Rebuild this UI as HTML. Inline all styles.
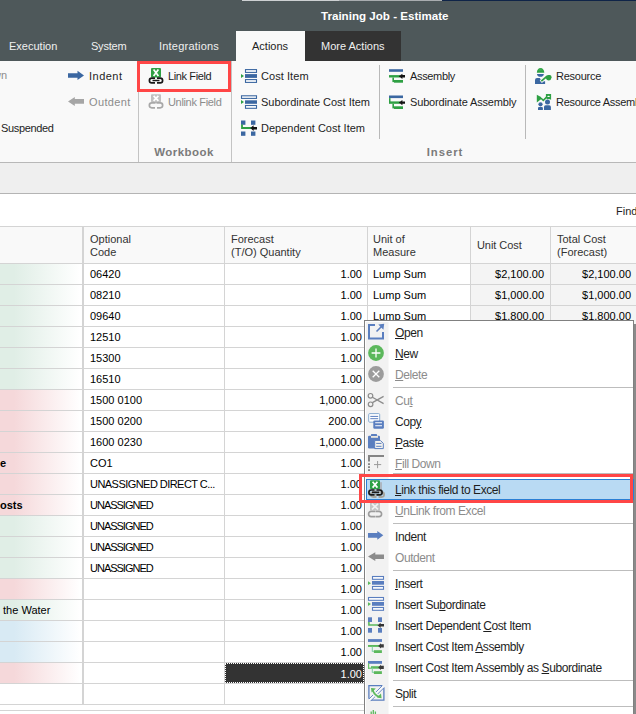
<!DOCTYPE html>
<html><head><meta charset="utf-8"><style>
html,body{margin:0;padding:0;width:636px;height:714px;overflow:hidden;background:#fff;position:relative}
.t{position:absolute;white-space:pre;line-height:1;font-family:"Liberation Sans",sans-serif}
.r{position:absolute}
svg{position:absolute;overflow:visible}
</style></head><body>
<div class="r" style="left:0px;top:0px;width:636px;height:61px;background:#4e585a;"></div>
<div class="r" style="left:242px;top:0px;width:97px;height:1px;background:#cdd0d2;"></div>
<div class="r" style="left:339px;top:0px;width:103px;height:1px;background:#a9adb0;"></div>
<div class="r" style="left:442px;top:0px;width:194px;height:1px;background:#0f2448;"></div>
<div class="t" style="left:321px;top:10.18px;font-size:11.6px;color:#ffffff;font-weight:bold;">Training Job - Estimate</div>
<div class="t" style="left:9px;top:40.69px;font-size:11px;color:#f0f0f0;font-weight:normal;">Execution</div>
<div class="t" style="left:91px;top:40.69px;font-size:11px;color:#f0f0f0;font-weight:normal;letter-spacing:-0.217px;">System</div>
<div class="t" style="left:159px;top:40.69px;font-size:11px;color:#f0f0f0;font-weight:normal;letter-spacing:0.211px;">Integrations</div>
<div class="r" style="left:236px;top:31px;width:69px;height:30px;background:#f9f9f9;"></div>
<div class="t" style="left:252px;top:40.69px;font-size:11px;color:#222;font-weight:normal;">Actions</div>
<div class="r" style="left:305px;top:31px;width:96px;height:30px;background:#333333;"></div>
<div class="t" style="left:321px;top:40.69px;font-size:11px;color:#f0f0f0;font-weight:normal;">More Actions</div>
<div class="r" style="left:0px;top:61px;width:636px;height:101px;background:#f9f9f9;"></div>
<div class="r" style="left:0px;top:162px;width:636px;height:1px;background:#b8b8b8;"></div>
<div class="r" style="left:138px;top:61px;width:1px;height:101px;background:#c4c4c4;"></div>
<div class="r" style="left:231px;top:61px;width:1px;height:101px;background:#c4c4c4;"></div>
<div class="r" style="left:379px;top:65px;width:1px;height:74px;background:#b9b9b9;"></div>
<div class="r" style="left:525px;top:65px;width:1px;height:74px;background:#b9b9b9;"></div>
<div class="t" style="left:-7px;top:69.69px;font-size:11px;color:#8c8c8c;font-weight:normal;">wn</div>
<div class="t" style="left:89px;top:70.69px;font-size:11px;color:#1e1e1e;font-weight:normal;letter-spacing:0.481px;">Indent</div>
<div class="t" style="left:89px;top:96.69px;font-size:11px;color:#8c8c8c;font-weight:normal;letter-spacing:0.360px;">Outdent</div>
<div class="t" style="left:1px;top:122.69px;font-size:11px;color:#1e1e1e;font-weight:normal;letter-spacing:-0.334px;">Suspended</div>
<div class="t" style="left:168px;top:70.69px;font-size:11px;color:#1e1e1e;font-weight:normal;letter-spacing:-0.386px;">Link Field</div>
<div class="t" style="left:168px;top:96.69px;font-size:11px;color:#8c8c8c;font-weight:normal;letter-spacing:-0.334px;">Unlink Field</div>
<div class="t" style="left:84px;width:200px;text-align:center;top:147.27px;font-size:11.5px;color:#7b7b7b;font-weight:bold;letter-spacing:0.426px;">Workbook</div>
<div class="t" style="left:261px;top:70.69px;font-size:11px;color:#1e1e1e;font-weight:normal;letter-spacing:0.065px;">Cost Item</div>
<div class="t" style="left:261px;top:96.69px;font-size:11px;color:#1e1e1e;font-weight:normal;letter-spacing:-0.023px;">Subordinate Cost Item</div>
<div class="t" style="left:261px;top:122.69px;font-size:11px;color:#1e1e1e;font-weight:normal;letter-spacing:0.003px;">Dependent Cost Item</div>
<div class="t" style="left:410px;top:70.69px;font-size:11px;color:#1e1e1e;font-weight:normal;letter-spacing:-0.341px;">Assembly</div>
<div class="t" style="left:410px;top:96.69px;font-size:11px;color:#1e1e1e;font-weight:normal;letter-spacing:-0.150px;">Subordinate Assembly</div>
<div class="t" style="left:345px;width:200px;text-align:center;top:147.43px;font-size:11.3px;color:#7b7b7b;font-weight:bold;letter-spacing:0.947px;">Insert</div>
<div class="t" style="left:556px;top:70.69px;font-size:11px;color:#1e1e1e;font-weight:normal;letter-spacing:-0.240px;">Resource</div>
<div class="t" style="left:556px;top:96.69px;font-size:11px;color:#1e1e1e;font-weight:normal;letter-spacing:-0.3px;">Resource Assembly</div>
<div class="r" style="left:137px;top:61px;width:88px;height:25px;border:3px solid #ff4646;"></div>
<div class="r" style="left:0px;top:163px;width:636px;height:30px;background:#efefef;"></div>
<div class="r" style="left:0px;top:193px;width:636px;height:1px;background:#b4b4b4;"></div>
<div class="r" style="left:0px;top:194px;width:636px;height:32px;background:#ffffff;"></div>
<div class="t" style="left:616px;top:205.69px;font-size:11px;color:#1e1e1e;font-weight:normal;">Find</div>
<div class="r" style="left:0px;top:226px;width:636px;height:1px;background:#d4d4d4;"></div>
<div class="r" style="left:0px;top:227px;width:636px;height:36px;background:#f9f9f9;"></div>
<div class="t" style="left:90px;top:233.69px;font-size:11px;color:#333;font-weight:normal;">Optional</div>
<div class="t" style="left:90px;top:246.69px;font-size:11px;color:#333;font-weight:normal;">Code</div>
<div class="t" style="left:231px;top:233.69px;font-size:11px;color:#333;font-weight:normal;">Forecast</div>
<div class="t" style="left:231px;top:246.69px;font-size:11px;color:#333;font-weight:normal;">(T/O) Quantity</div>
<div class="t" style="left:373px;top:233.69px;font-size:11px;color:#333;font-weight:normal;">Unit of</div>
<div class="t" style="left:373px;top:246.69px;font-size:11px;color:#333;font-weight:normal;">Measure</div>
<div class="t" style="left:477px;top:239.69px;font-size:11px;color:#333;font-weight:normal;letter-spacing:-0.069px;">Unit Cost</div>
<div class="t" style="left:557px;top:233.69px;font-size:11px;color:#333;font-weight:normal;">Total Cost</div>
<div class="t" style="left:557px;top:246.69px;font-size:11px;color:#333;font-weight:normal;">(Forecast)</div>
<div class="r" style="left:0px;top:263px;width:636px;height:1px;background:#d4d4d4;"></div>
<div class="r" style="left:0px;top:264px;width:82px;height:20px;background:linear-gradient(to right, #e0eee6 0px, #e0eee6 14px, #ffffff 80px);"></div>
<div class="r" style="left:84px;top:264px;width:552px;height:20px;background:#ffffff;"></div>
<div class="r" style="left:471px;top:264px;width:165px;height:20px;background:#f4f4f4;"></div>
<div class="t" style="left:90px;top:268.69px;font-size:11px;color:#000;font-weight:normal;">06420</div>
<div class="t" style="right:274px;top:268.69px;font-size:11px;color:#000;font-weight:normal;">1.00</div>
<div class="t" style="left:373px;top:268.69px;font-size:11px;color:#000;font-weight:normal;">Lump Sum</div>
<div class="t" style="right:92px;top:268.69px;font-size:11px;color:#000;font-weight:normal;">$2,100.00</div>
<div class="t" style="right:5px;top:268.69px;font-size:11px;color:#000;font-weight:normal;">$2,100.00</div>
<div class="r" style="left:0px;top:284px;width:636px;height:1px;background:#d4d4d4;"></div>
<div class="r" style="left:0px;top:285px;width:82px;height:20px;background:linear-gradient(to right, #e0eee6 0px, #e0eee6 14px, #ffffff 80px);"></div>
<div class="r" style="left:84px;top:285px;width:552px;height:20px;background:#ffffff;"></div>
<div class="r" style="left:471px;top:285px;width:165px;height:20px;background:#f4f4f4;"></div>
<div class="t" style="left:90px;top:289.69px;font-size:11px;color:#000;font-weight:normal;">08210</div>
<div class="t" style="right:274px;top:289.69px;font-size:11px;color:#000;font-weight:normal;">1.00</div>
<div class="t" style="left:373px;top:289.69px;font-size:11px;color:#000;font-weight:normal;">Lump Sum</div>
<div class="t" style="right:92px;top:289.69px;font-size:11px;color:#000;font-weight:normal;">$1,000.00</div>
<div class="t" style="right:5px;top:289.69px;font-size:11px;color:#000;font-weight:normal;">$1,000.00</div>
<div class="r" style="left:0px;top:305px;width:636px;height:1px;background:#d4d4d4;"></div>
<div class="r" style="left:0px;top:306px;width:82px;height:20px;background:linear-gradient(to right, #e0eee6 0px, #e0eee6 14px, #ffffff 80px);"></div>
<div class="r" style="left:84px;top:306px;width:552px;height:20px;background:#ffffff;"></div>
<div class="r" style="left:471px;top:306px;width:165px;height:20px;background:#f4f4f4;"></div>
<div class="t" style="left:90px;top:310.69px;font-size:11px;color:#000;font-weight:normal;">09640</div>
<div class="t" style="right:274px;top:310.69px;font-size:11px;color:#000;font-weight:normal;">1.00</div>
<div class="t" style="left:373px;top:310.69px;font-size:11px;color:#000;font-weight:normal;">Lump Sum</div>
<div class="t" style="right:92px;top:310.69px;font-size:11px;color:#000;font-weight:normal;">$1,800.00</div>
<div class="t" style="right:5px;top:310.69px;font-size:11px;color:#000;font-weight:normal;">$1,800.00</div>
<div class="r" style="left:0px;top:326px;width:636px;height:1px;background:#d4d4d4;"></div>
<div class="r" style="left:0px;top:327px;width:82px;height:20px;background:linear-gradient(to right, #e0eee6 0px, #e0eee6 14px, #ffffff 80px);"></div>
<div class="r" style="left:84px;top:327px;width:552px;height:20px;background:#ffffff;"></div>
<div class="r" style="left:471px;top:327px;width:165px;height:20px;background:#f4f4f4;"></div>
<div class="t" style="left:90px;top:331.69px;font-size:11px;color:#000;font-weight:normal;">12510</div>
<div class="t" style="right:274px;top:331.69px;font-size:11px;color:#000;font-weight:normal;">1.00</div>
<div class="r" style="left:0px;top:347px;width:636px;height:1px;background:#d4d4d4;"></div>
<div class="r" style="left:0px;top:348px;width:82px;height:20px;background:linear-gradient(to right, #e0eee6 0px, #e0eee6 14px, #ffffff 80px);"></div>
<div class="r" style="left:84px;top:348px;width:552px;height:20px;background:#ffffff;"></div>
<div class="r" style="left:471px;top:348px;width:165px;height:20px;background:#f4f4f4;"></div>
<div class="t" style="left:90px;top:352.69px;font-size:11px;color:#000;font-weight:normal;">15300</div>
<div class="t" style="right:274px;top:352.69px;font-size:11px;color:#000;font-weight:normal;">1.00</div>
<div class="r" style="left:0px;top:368px;width:636px;height:1px;background:#d4d4d4;"></div>
<div class="r" style="left:0px;top:369px;width:82px;height:20px;background:linear-gradient(to right, #e0eee6 0px, #e0eee6 14px, #ffffff 80px);"></div>
<div class="r" style="left:84px;top:369px;width:552px;height:20px;background:#ffffff;"></div>
<div class="r" style="left:471px;top:369px;width:165px;height:20px;background:#f4f4f4;"></div>
<div class="t" style="left:90px;top:373.69px;font-size:11px;color:#000;font-weight:normal;">16510</div>
<div class="t" style="right:274px;top:373.69px;font-size:11px;color:#000;font-weight:normal;">1.00</div>
<div class="r" style="left:0px;top:389px;width:636px;height:1px;background:#d4d4d4;"></div>
<div class="r" style="left:0px;top:390px;width:82px;height:20px;background:linear-gradient(to right, #f5d8da 0px, #f5d8da 14px, #ffffff 80px);"></div>
<div class="r" style="left:84px;top:390px;width:552px;height:20px;background:#ffffff;"></div>
<div class="r" style="left:471px;top:390px;width:165px;height:20px;background:#f4f4f4;"></div>
<div class="t" style="left:90px;top:394.69px;font-size:11px;color:#000;font-weight:normal;">1500 0100</div>
<div class="t" style="right:274px;top:394.69px;font-size:11px;color:#000;font-weight:normal;">1,000.00</div>
<div class="r" style="left:0px;top:410px;width:636px;height:1px;background:#d4d4d4;"></div>
<div class="r" style="left:0px;top:411px;width:82px;height:20px;background:linear-gradient(to right, #f5d8da 0px, #f5d8da 14px, #ffffff 80px);"></div>
<div class="r" style="left:84px;top:411px;width:552px;height:20px;background:#ffffff;"></div>
<div class="r" style="left:471px;top:411px;width:165px;height:20px;background:#f4f4f4;"></div>
<div class="t" style="left:90px;top:415.69px;font-size:11px;color:#000;font-weight:normal;">1500 0200</div>
<div class="t" style="right:274px;top:415.69px;font-size:11px;color:#000;font-weight:normal;">200.00</div>
<div class="r" style="left:0px;top:431px;width:636px;height:1px;background:#d4d4d4;"></div>
<div class="r" style="left:0px;top:432px;width:82px;height:20px;background:linear-gradient(to right, #f5d8da 0px, #f5d8da 14px, #ffffff 80px);"></div>
<div class="r" style="left:84px;top:432px;width:552px;height:20px;background:#ffffff;"></div>
<div class="r" style="left:471px;top:432px;width:165px;height:20px;background:#f4f4f4;"></div>
<div class="t" style="left:90px;top:436.69px;font-size:11px;color:#000;font-weight:normal;">1600 0230</div>
<div class="t" style="right:274px;top:436.69px;font-size:11px;color:#000;font-weight:normal;">1,000.00</div>
<div class="r" style="left:0px;top:452px;width:636px;height:1px;background:#d4d4d4;"></div>
<div class="r" style="left:0px;top:453px;width:82px;height:20px;background:linear-gradient(to right, #f5d8da 0px, #f5d8da 14px, #ffffff 80px);"></div>
<div class="r" style="left:84px;top:453px;width:552px;height:20px;background:#ffffff;"></div>
<div class="r" style="left:471px;top:453px;width:165px;height:20px;background:#f4f4f4;"></div>
<div class="t" style="left:0px;top:457.69px;font-size:11px;color:#000;font-weight:normal;"><b>e</b></div>
<div class="t" style="left:90px;top:457.69px;font-size:11px;color:#000;font-weight:normal;">CO1</div>
<div class="t" style="right:274px;top:457.69px;font-size:11px;color:#000;font-weight:normal;">1.00</div>
<div class="r" style="left:0px;top:473px;width:636px;height:1px;background:#d4d4d4;"></div>
<div class="r" style="left:0px;top:474px;width:82px;height:20px;background:linear-gradient(to right, #f5d8da 0px, #f5d8da 14px, #ffffff 80px);"></div>
<div class="r" style="left:84px;top:474px;width:552px;height:20px;background:#ffffff;"></div>
<div class="r" style="left:471px;top:474px;width:165px;height:20px;background:#f4f4f4;"></div>
<div class="t" style="left:90px;top:478.69px;font-size:11px;color:#000;font-weight:normal;letter-spacing:-0.544px;">UNASSIGNED DIRECT C...</div>
<div class="t" style="right:274px;top:478.69px;font-size:11px;color:#000;font-weight:normal;">1.00</div>
<div class="r" style="left:0px;top:494px;width:636px;height:1px;background:#d4d4d4;"></div>
<div class="r" style="left:0px;top:495px;width:82px;height:20px;background:linear-gradient(to right, #f5d8da 0px, #f5d8da 14px, #ffffff 80px);"></div>
<div class="r" style="left:84px;top:495px;width:552px;height:20px;background:#ffffff;"></div>
<div class="r" style="left:471px;top:495px;width:165px;height:20px;background:#f4f4f4;"></div>
<div class="t" style="left:0px;top:499.69px;font-size:11px;color:#000;font-weight:normal;"><b>osts</b></div>
<div class="t" style="left:90px;top:499.69px;font-size:11px;color:#000;font-weight:normal;letter-spacing:-1.006px;">UNASSIGNED</div>
<div class="t" style="right:274px;top:499.69px;font-size:11px;color:#000;font-weight:normal;">1.00</div>
<div class="r" style="left:0px;top:515px;width:636px;height:1px;background:#d4d4d4;"></div>
<div class="r" style="left:0px;top:516px;width:82px;height:20px;background:linear-gradient(to right, #e0eee6 0px, #e0eee6 14px, #ffffff 80px);"></div>
<div class="r" style="left:84px;top:516px;width:552px;height:20px;background:#ffffff;"></div>
<div class="r" style="left:471px;top:516px;width:165px;height:20px;background:#f4f4f4;"></div>
<div class="t" style="left:90px;top:520.69px;font-size:11px;color:#000;font-weight:normal;letter-spacing:-1.006px;">UNASSIGNED</div>
<div class="t" style="right:274px;top:520.69px;font-size:11px;color:#000;font-weight:normal;">1.00</div>
<div class="r" style="left:0px;top:536px;width:636px;height:1px;background:#d4d4d4;"></div>
<div class="r" style="left:0px;top:537px;width:82px;height:20px;background:linear-gradient(to right, #e0eee6 0px, #e0eee6 14px, #ffffff 80px);"></div>
<div class="r" style="left:84px;top:537px;width:552px;height:20px;background:#ffffff;"></div>
<div class="r" style="left:471px;top:537px;width:165px;height:20px;background:#f4f4f4;"></div>
<div class="t" style="left:90px;top:541.69px;font-size:11px;color:#000;font-weight:normal;letter-spacing:-1.006px;">UNASSIGNED</div>
<div class="t" style="right:274px;top:541.69px;font-size:11px;color:#000;font-weight:normal;">1.00</div>
<div class="r" style="left:0px;top:557px;width:636px;height:1px;background:#d4d4d4;"></div>
<div class="r" style="left:0px;top:558px;width:82px;height:20px;background:linear-gradient(to right, #e0eee6 0px, #e0eee6 14px, #ffffff 80px);"></div>
<div class="r" style="left:84px;top:558px;width:552px;height:20px;background:#ffffff;"></div>
<div class="r" style="left:471px;top:558px;width:165px;height:20px;background:#f4f4f4;"></div>
<div class="t" style="left:90px;top:562.69px;font-size:11px;color:#000;font-weight:normal;letter-spacing:-1.006px;">UNASSIGNED</div>
<div class="t" style="right:274px;top:562.69px;font-size:11px;color:#000;font-weight:normal;">1.00</div>
<div class="r" style="left:0px;top:578px;width:636px;height:1px;background:#d4d4d4;"></div>
<div class="r" style="left:0px;top:579px;width:82px;height:20px;background:linear-gradient(to right, #f5d8da 0px, #f5d8da 14px, #ffffff 80px);"></div>
<div class="r" style="left:84px;top:579px;width:552px;height:20px;background:#ffffff;"></div>
<div class="r" style="left:471px;top:579px;width:165px;height:20px;background:#f4f4f4;"></div>
<div class="t" style="right:274px;top:583.69px;font-size:11px;color:#000;font-weight:normal;">1.00</div>
<div class="r" style="left:0px;top:599px;width:636px;height:1px;background:#d4d4d4;"></div>
<div class="r" style="left:0px;top:600px;width:82px;height:20px;background:linear-gradient(to right, #e0eee6 0px, #e0eee6 14px, #ffffff 80px);"></div>
<div class="r" style="left:84px;top:600px;width:552px;height:20px;background:#ffffff;"></div>
<div class="r" style="left:471px;top:600px;width:165px;height:20px;background:#f4f4f4;"></div>
<div class="t" style="left:0px;top:604.69px;font-size:11px;color:#000;font-weight:normal;"> the Water</div>
<div class="t" style="right:274px;top:604.69px;font-size:11px;color:#000;font-weight:normal;">1.00</div>
<div class="r" style="left:0px;top:620px;width:636px;height:1px;background:#d4d4d4;"></div>
<div class="r" style="left:0px;top:621px;width:82px;height:20px;background:linear-gradient(to right, #d8eaf4 0px, #d8eaf4 14px, #ffffff 80px);"></div>
<div class="r" style="left:84px;top:621px;width:552px;height:20px;background:#ffffff;"></div>
<div class="r" style="left:471px;top:621px;width:165px;height:20px;background:#f4f4f4;"></div>
<div class="t" style="right:274px;top:625.69px;font-size:11px;color:#000;font-weight:normal;">1.00</div>
<div class="r" style="left:0px;top:641px;width:636px;height:1px;background:#d4d4d4;"></div>
<div class="r" style="left:0px;top:642px;width:82px;height:20px;background:linear-gradient(to right, #d8eaf4 0px, #d8eaf4 14px, #ffffff 80px);"></div>
<div class="r" style="left:84px;top:642px;width:552px;height:20px;background:#ffffff;"></div>
<div class="r" style="left:471px;top:642px;width:165px;height:20px;background:#f4f4f4;"></div>
<div class="t" style="right:274px;top:646.69px;font-size:11px;color:#000;font-weight:normal;">1.00</div>
<div class="r" style="left:0px;top:662px;width:636px;height:1px;background:#d4d4d4;"></div>
<div class="r" style="left:0px;top:663px;width:82px;height:20px;background:linear-gradient(to right, #f5d8da 0px, #f5d8da 14px, #ffffff 80px);"></div>
<div class="r" style="left:84px;top:663px;width:552px;height:20px;background:#ffffff;"></div>
<div class="r" style="left:471px;top:663px;width:165px;height:20px;background:#f4f4f4;"></div>
<div class="t" style="right:274px;top:667.69px;font-size:11px;color:#000;font-weight:normal;">1.00</div>
<div class="r" style="left:0px;top:683px;width:636px;height:1px;background:#d4d4d4;"></div>
<div class="r" style="left:0px;top:684px;width:82px;height:20px;background:linear-gradient(to right, #ffffff 0px, #ffffff 14px, #ffffff 80px);"></div>
<div class="r" style="left:84px;top:684px;width:552px;height:20px;background:#ffffff;"></div>
<div class="r" style="left:471px;top:684px;width:165px;height:20px;background:#f4f4f4;"></div>
<div class="r" style="left:0px;top:704px;width:636px;height:1px;background:#d4d4d4;"></div>
<div class="r" style="left:0px;top:705px;width:636px;height:5px;background:#ffffff;"></div>
<div class="r" style="left:0px;top:710px;width:636px;height:1px;background:#d4d4d4;"></div>
<div class="r" style="left:0px;top:711px;width:636px;height:3px;background:#ffffff;"></div>
<div class="r" style="left:82px;top:227px;width:2px;height:477px;background:#d4d4d4;"></div>
<div class="r" style="left:224px;top:227px;width:1px;height:477px;background:#d4d4d4;"></div>
<div class="r" style="left:367px;top:227px;width:1px;height:477px;background:#d4d4d4;"></div>
<div class="r" style="left:470px;top:227px;width:1px;height:477px;background:#d4d4d4;"></div>
<div class="r" style="left:550px;top:227px;width:1px;height:477px;background:#d4d4d4;"></div>
<div class="r" style="left:225px;top:663px;width:137px;height:18px;background:#333;border:1px dotted #fff;"></div>
<div class="t" style="right:274px;top:668.69px;font-size:11px;color:#ffffff;font-weight:normal;">1.00</div>
<div class="r" style="left:366px;top:324px;width:270px;height:390px;background:#8a8a8a;"></div>
<div class="r" style="left:364px;top:320px;width:268px;height:400px;background:#ffffff;border:1px solid #808080;"></div>
<div class="r" style="left:366px;top:322px;width:22px;height:392px;background:#f2f2f2;"></div>
<div class="r" style="left:388px;top:322px;width:1px;height:392px;background:#f8f8f8;"></div>
<div class="r" style="left:366px;top:479px;width:266px;height:19px;background:#b9daf3;border:1px solid #2a7fd4;"></div>
<div class="t" style="left:395px;top:326.84px;font-size:12px;color:#1e1e1e;font-weight:normal;letter-spacing:-0.42px;"><u>O</u>pen</div>
<div class="t" style="left:395px;top:347.84px;font-size:12px;color:#1e1e1e;font-weight:normal;letter-spacing:-0.42px;"><u>N</u>ew</div>
<div class="t" style="left:395px;top:368.84px;font-size:12px;color:#8c8c8c;font-weight:normal;letter-spacing:-0.42px;"><u>D</u>elete</div>
<div class="r" style="left:393px;top:387px;width:240px;height:1px;background:#bdbdbd;"></div>
<div class="t" style="left:395px;top:394.84px;font-size:12px;color:#8c8c8c;font-weight:normal;letter-spacing:-0.42px;">Cu<u>t</u></div>
<div class="t" style="left:395px;top:415.84px;font-size:12px;color:#1e1e1e;font-weight:normal;letter-spacing:-0.42px;">Cop<u>y</u></div>
<div class="t" style="left:395px;top:436.84px;font-size:12px;color:#1e1e1e;font-weight:normal;letter-spacing:-0.42px;"><u>P</u>aste</div>
<div class="t" style="left:395px;top:457.84px;font-size:12px;color:#8c8c8c;font-weight:normal;letter-spacing:-0.42px;"><u>F</u>ill Down</div>
<div class="r" style="left:393px;top:473px;width:240px;height:1px;background:#bdbdbd;"></div>
<div class="t" style="left:395px;top:483.84px;font-size:12px;color:#1e1e1e;font-weight:normal;letter-spacing:-0.42px;"><u>L</u>ink this field to Excel</div>
<div class="t" style="left:395px;top:504.84px;font-size:12px;color:#8c8c8c;font-weight:normal;letter-spacing:-0.42px;"><u>U</u>nLink from Excel</div>
<div class="r" style="left:393px;top:523px;width:240px;height:1px;background:#bdbdbd;"></div>
<div class="t" style="left:395px;top:530.84px;font-size:12px;color:#1e1e1e;font-weight:normal;letter-spacing:-0.42px;">Indent</div>
<div class="t" style="left:395px;top:551.84px;font-size:12px;color:#8c8c8c;font-weight:normal;letter-spacing:-0.42px;">Outdent</div>
<div class="r" style="left:393px;top:570px;width:240px;height:1px;background:#bdbdbd;"></div>
<div class="t" style="left:395px;top:577.84px;font-size:12px;color:#1e1e1e;font-weight:normal;letter-spacing:-0.42px;"><u>I</u>nsert</div>
<div class="t" style="left:395px;top:598.84px;font-size:12px;color:#1e1e1e;font-weight:normal;letter-spacing:-0.42px;">Insert Su<u>b</u>ordinate</div>
<div class="t" style="left:395px;top:619.84px;font-size:12px;color:#1e1e1e;font-weight:normal;letter-spacing:-0.42px;">Insert Dependent <u>C</u>ost Item</div>
<div class="t" style="left:395px;top:640.84px;font-size:12px;color:#1e1e1e;font-weight:normal;letter-spacing:-0.42px;">Insert Cost Item <u>A</u>ssembly</div>
<div class="t" style="left:395px;top:661.84px;font-size:12px;color:#1e1e1e;font-weight:normal;letter-spacing:-0.42px;">Insert Cost Item Assembly as <u>S</u>ubordinate</div>
<div class="r" style="left:393px;top:680px;width:240px;height:1px;background:#bdbdbd;"></div>
<div class="t" style="left:395px;top:687.84px;font-size:12px;color:#1e1e1e;font-weight:normal;letter-spacing:-0.42px;">Split</div>
<div class="r" style="left:393px;top:706px;width:240px;height:1px;background:#bdbdbd;"></div>
<div class="r" style="left:359px;top:474px;width:268px;height:23px;border:3px solid #ff4646;"></div>
<svg style="left:0;top:0" width="636" height="714" viewBox="0 0 636 714"><path d="M68 73.2 H77.5 V70.7 L84 75.4 L77.5 80 V77.8 H68 Z" fill="#3b67a1"/><path d="M68 101.4 L74.8 97 V99.1 H84 V103.8 H74.8 V106 Z" fill="#a6a6a6"/><rect x="151" y="68" width="10" height="9.5" rx="1" fill="#2ea043"/><path d="M153.6 69.6 L158.4 76.1 M158.4 69.6 L153.6 76.1" stroke="#fff" stroke-width="1.7"/><path d="M155.0 78.10000000000001 H151.8 A2.4 2.4 0 0 0 151.8 82.9 H155.0 M157.0 78.10000000000001 H160.2 A2.4 2.4 0 0 1 160.2 82.9 H157.0 M152.5 80.5 H159.5" stroke="#1a1a1a" stroke-width="1.7" fill="none"/><rect x="151" y="94.3" width="10" height="8" rx="1" fill="#c0c0c0"/><path d="M153.6 95.89999999999999 L158.4 100.89999999999999 M158.4 95.89999999999999 L153.6 100.89999999999999" stroke="#fff" stroke-width="1.7"/><path d="M155 103.5 V102.9 H151.8 A2.4 2.4 0 0 0 151.8 107.8 H155 M157 107.8 H160.2 A2.4 2.4 0 0 0 160.2 102.9 H157 V103.5" stroke="#a8a8a8" stroke-width="1.7" fill="none"/><rect x="245.5" y="69.6" width="11" height="2.8" fill="#fff" stroke="#3b67a1" stroke-width="1.1"/><rect x="245" y="74.1" width="12" height="3.8" fill="#3b67a1"/><rect x="245.5" y="79.6" width="11" height="2.8" fill="#fff" stroke="#3b67a1" stroke-width="1.1"/><path d="M241 74 L244 76 L241 78 Z" fill="#2ea043"/><rect x="241.5" y="95.8" width="15" height="2.6" fill="#fff" stroke="#3b67a1" stroke-width="1.1"/><rect x="245" y="100.3" width="12" height="3.5" fill="#3b67a1"/><rect x="245.5" y="105.5" width="11" height="2.8" fill="#fff" stroke="#3b67a1" stroke-width="1.1"/><path d="M241 100 L244 102 L241 104 Z" fill="#2ea043"/><rect x="241" y="120.5" width="4.4" height="4.3" fill="#3b67a1"/><rect x="251" y="120.5" width="4.4" height="4.3" fill="#3b67a1"/><rect x="241" y="131.5" width="4.4" height="4.3" fill="#3b67a1"/><rect x="251" y="131.5" width="4.4" height="4.3" fill="#3b67a1"/><path d="M242 124.5 V128 H251" stroke="#2ea043" stroke-width="1.8" fill="none"/><path d="M250.3 128.1 L253.6 125.3 V126.9 H257 V129.4 H253.6 V131 Z" fill="#111"/><rect x="389" y="69.2" width="14" height="2.6" fill="#3b67a1"/><rect x="389" y="75.10000000000001" width="11" height="2.4" fill="#2ea043"/><path d="M398.8 76.3 L402.4 73.7 V75.10000000000001 H405 V77.5 H402.4 V78.9 Z" fill="#111"/><rect x="392.4" y="77.5" width="1.6" height="4.6" fill="#2ea043"/><rect x="394" y="80.0" width="9" height="2.7" fill="#2ea043"/><rect x="389" y="95.5" width="14" height="2.6" fill="#3b67a1"/><rect x="389" y="98.1" width="1.5" height="5" fill="#2ea043"/><rect x="389" y="101.4" width="11" height="2.4" fill="#2ea043"/><path d="M398.8 102.6 L402.4 100.0 V101.4 H405 V103.8 H402.4 V105.2 Z" fill="#111"/><rect x="392.4" y="103.8" width="1.6" height="4.6" fill="#2ea043"/><rect x="394" y="106.3" width="9" height="2.7" fill="#2ea043"/><path d="M536.8 72.8 C536.8 69.6 538.8 68 540.55 68 C542.3 68 544.3 69.6 544.3 72.8 Z" fill="#2ea043"/><path d="M539.2 68.6 V70.8 M540.55 68.2 V70.8 M541.9 68.6 V70.8" stroke="#4cb85e" stroke-width="0.6"/><path d="M537 73.9 H543.8 C543.8 75.8 542.5 76.7 540.4 76.7 C538.3 76.7 537 75.8 537 73.9 Z" fill="#3b67a1"/><path d="M535 84 V80 Q535 78 537 78 H539.8 L541.8 81.2 H545.1 V84 Z" fill="#3b67a1"/><path d="M540.8 81.8 L546.3 76.8" stroke="#f9f9f9" stroke-width="3.2"/><path d="M541.3 81.2 L546.3 76.8" stroke="#2ea043" stroke-width="1.7"/><path d="M545.2 77.2 Q546.2 75 548.3 75 H550 Q551.6 75.4 551.6 77.4 Q551.3 79.9 548.7 80.6 L547 80 Z" fill="#2ea043"/><path d="M536.8 94.7 L541 97 V99.2 L536.8 102.4 Z" fill="#2ea043"/><path d="M540.8 98 L543.3 100.3 L546.6 97.2" stroke="#2ea043" stroke-width="1.6" fill="none"/><path d="M545.9 94 H551.1 V99.7 Q549 98.5 547.5 99.2 L545.9 98 Z" fill="#2ea043"/><path d="M547.3 96.9 A1.25 1.25 0 0 1 549.8 96.9 Z" fill="#fff"/><circle cx="540.5" cy="104.3" r="2.1" fill="#3b67a1"/><path d="M538 110 V108.1 Q538 107.1 539 107.1 H541.9 Q542.9 107.1 542.9 108.1 V110 Z" fill="#3b67a1"/><circle cx="547.5" cy="102" r="2.5" fill="#3b67a1"/><path d="M544 110 V106.9 Q544 105.2 545.7 105.2 H549.2 Q550.9 105.2 550.9 106.9 V110 Z" fill="#3b67a1"/><path d="M375 325 H369 V338.6 H383 V332" stroke="#5a7ebf" stroke-width="2" fill="none"/><path d="M376.5 331.5 L381.5 326.5" stroke="#5a7ebf" stroke-width="1.6"/><path d="M384.2 323.8 L378.3 324.6 L383.4 329.7 Z" fill="#5a7ebf"/><circle cx="376" cy="353" r="7.9" fill="#5cb85c"/><path d="M371.6 353 H380.4 M376 348.6 V357.4" stroke="#fff" stroke-width="1.3"/><circle cx="376" cy="374" r="7.9" fill="#9c9c9c"/><path d="M372.7 370.7 L379.3 377.3 M379.3 370.7 L372.7 377.3" stroke="#fff" stroke-width="1.3"/><circle cx="370.5" cy="395.8" r="2.3" fill="none" stroke="#8c8c8c" stroke-width="1.2"/><circle cx="370.6" cy="404.3" r="2.3" fill="none" stroke="#8c8c8c" stroke-width="1.2"/><path d="M372.4 397.2 L383.6 403.6 M372.4 402.6 L383.6 396.4" stroke="#8c8c8c" stroke-width="1.3"/><rect x="368.7" y="413.6" width="11" height="8.6" rx="1" fill="#fff" stroke="#86a9cf" stroke-width="1"/><path d="M370.3 416.4 H378.2 M370.3 418.7 H378.2" stroke="#5a7ebf" stroke-width="1"/><rect x="373.3" y="420.6" width="10.6" height="8.2" rx="1.2" fill="#5a7ebf"/><path d="M375.2 422.8 H382 M375.2 425.7 H382" stroke="#fff" stroke-width="1.1"/><rect x="368" y="435.8" width="12" height="12.7" rx="1.2" fill="#5a7ebf"/><rect x="371" y="434" width="6" height="2.4" rx="0.6" fill="#5a7ebf"/><rect x="371" y="436" width="7" height="1.8" fill="#ece8de"/><path d="M374.7 440.4 H380.3 L383.3 443.4 V448.6 H374.7 Z" fill="#f6f4ee" stroke="#5a7ebf" stroke-width="1"/><path d="M376.2 443.4 H381.5 M376.2 446.3 H381.5" stroke="#5a7ebf" stroke-width="1"/><path d="M368 456 H384 M369 455 V461.5" stroke="#858585" stroke-width="2" fill="none"/><path d="M369 463.3 V471.3" stroke="#858585" stroke-width="2" stroke-dasharray="1.6 1.4"/><path d="M374 464.6 H381.2 M377.6 461 V468.2" stroke="#9a9a9a" stroke-width="1"/><rect x="372" y="482.2" width="10" height="9" fill="#a9aab0" opacity="0.75"/><path d="M376.5 492.2 H373.3 A2.4 2.4 0 0 0 373.3 497.0 H376.5 M378.5 492.2 H381.7 A2.4 2.4 0 0 1 381.7 497.0 H378.5 M374 494.6 H381" stroke="#a6a49c" stroke-width="1.8" fill="none"/><rect x="370" y="480.2" width="10" height="8.8" rx="1" fill="#2ea043"/><path d="M372.6 481.8 L377.4 487.6 M377.4 481.8 L372.6 487.6" stroke="#fff" stroke-width="1.7"/><path d="M374.5 490.0 H371.3 A2.4 2.4 0 0 0 371.3 494.8 H374.5 M376.5 490.0 H379.7 A2.4 2.4 0 0 1 379.7 494.8 H376.5 M372 492.40000000000003 H379" stroke="#1a1a1a" stroke-width="1.7" fill="none"/><rect x="370" y="503" width="10" height="7.2" fill="#c4c4c4"/><path d="M372 503.8 L378 509.4 M378 503.8 L372 509.4" stroke="#f2f2f2" stroke-width="1.6"/><path d="M374.2 512.3 V511.4 H371.2 A2.6 2.6 0 0 0 371.2 516.6 H374.2 V515.8 M376.2 515.8 V516.6 H379 A2.6 2.6 0 0 0 379 511.4 H376.2 V512.3" stroke="#9c9c9c" stroke-width="1.6" fill="none"/><path d="M368 533 H377.3 V531 L383.3 535.3 L377.3 539.7 V537.7 H368 Z" fill="#5a7ebf"/><path d="M368 556.6 L375.3 552.2 V554.4 H384 V559 H375.3 V561 Z" fill="#8c8c8c"/><rect x="372.5" y="576.5" width="11" height="2.8" fill="#fff" stroke="#5a7ebf" stroke-width="1.1"/><rect x="372" y="581" width="12" height="3.7" fill="#5a7ebf"/><rect x="372.5" y="586.5" width="11" height="2.8" fill="#fff" stroke="#5a7ebf" stroke-width="1.1"/><path d="M368 581.3 L371 583.2 L368 585.1 Z" fill="#5cb85c"/><rect x="368.5" y="597.5" width="15" height="2.8" fill="#fff" stroke="#5a7ebf" stroke-width="1.1"/><rect x="372" y="602" width="12" height="3.8" fill="#5a7ebf"/><rect x="372.5" y="607.5" width="11" height="2.8" fill="#fff" stroke="#5a7ebf" stroke-width="1.1"/><path d="M368 602.2 L371 604.1 L368 606 Z" fill="#5cb85c"/><rect x="368" y="617.3" width="4" height="4.7" fill="#5a7ebf"/><rect x="378" y="617.3" width="4" height="4.7" fill="#5a7ebf"/><rect x="368" y="628" width="4" height="4.7" fill="#5a7ebf"/><rect x="378" y="628" width="4" height="4.7" fill="#5a7ebf"/><path d="M368.9 622 V625 H378" stroke="#5cb85c" stroke-width="1.6" fill="none"/><path d="M377.5 625.3 L380.6 622.7 V624 H384 V626.6 H380.6 V628 Z" fill="#333"/><rect x="368" y="639.1" width="14" height="2.8" fill="#5a7ebf"/><rect x="368" y="645.0" width="11" height="1.9" fill="#5cb85c"/><path d="M378.2 645.9 L381 643.3 V644.3 H383.8 V647.5 H381 V648.5 Z" fill="#3a3a3a"/><rect x="371.8" y="646.6" width="1" height="4.4" fill="#7fd0a4"/><rect x="371.8" y="650.8000000000001" width="2.4" height="1" fill="#7fd0a4"/><rect x="373.9" y="650.2" width="8" height="2.8" fill="#5cb85c"/><rect x="368" y="661" width="14" height="2.8" fill="#5a7ebf"/><rect x="368" y="663.2" width="1.2" height="5.6" fill="#66c266"/><rect x="368" y="667.6" width="3" height="1.2" fill="#66c266"/><rect x="371" y="666.2" width="9" height="2.5" fill="#5cb85c"/><path d="M378.2 667.4 L381 664.8 V665.8 H383.8 V669.0 H381 V670.0 Z" fill="#3a3a3a"/><rect x="371.8" y="667.6" width="1" height="4.4" fill="#7fd0a4"/><rect x="371.8" y="671.8000000000001" width="2.4" height="1" fill="#7fd0a4"/><rect x="373.9" y="671.2" width="8" height="2.8" fill="#5cb85c"/><path d="M368.9 698.8 V685.7 H382.2 M383.9 687.6 V700.2 H370.6" stroke="#5a7ebf" stroke-width="1.3" fill="none"/><path d="M383.2 686.6 L369.6 700.2" stroke="#fafafa" stroke-width="2.2"/><path d="M382.3 685.7 L368.9 699.1 M384 687.7 L370.6 701.1" stroke="#5a7ebf" stroke-width="0.9"/><path d="M373 690.5 Q374.4 695.2 379.3 696.7" stroke="#f4f4f4" stroke-width="3.4" fill="none"/><path d="M372.6 689.8 Q374.2 695.4 379.8 697" stroke="#5cb85c" stroke-width="1.7" fill="none"/><path d="M371 688 L375.8 688.6 L371.6 692.6 Z M381.6 698.3 L376.9 697.6 L381 693.6 Z" fill="#5cb85c"/><path d="M371.2 711.5 V714 M373.3 710 V714 M375.4 711.5 V714" stroke="#5cb85c" stroke-width="1.3"/></svg>
</body></html>
